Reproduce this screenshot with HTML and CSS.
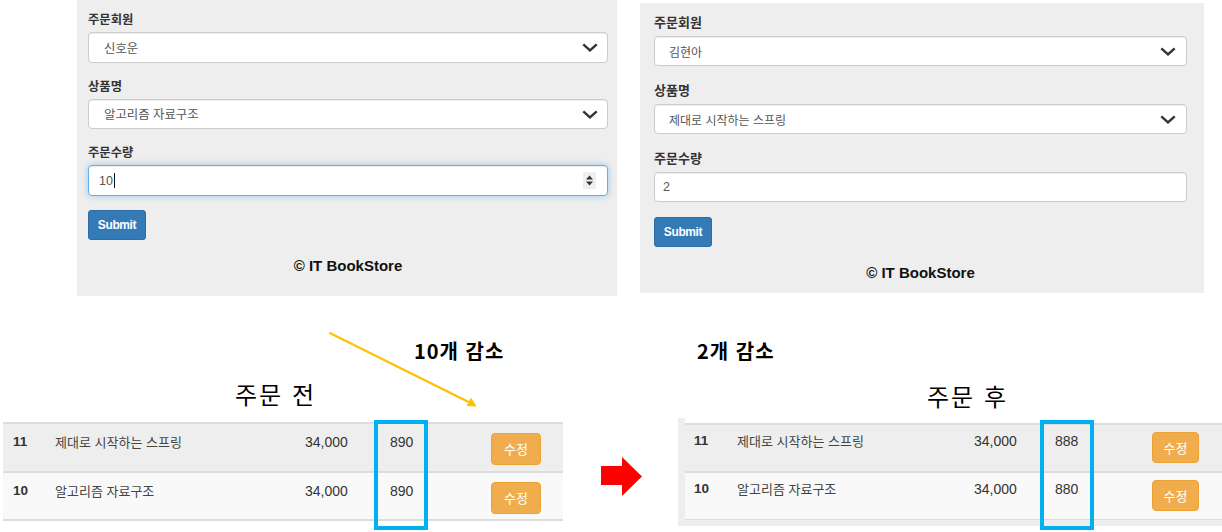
FILE: index.html
```html
<!DOCTYPE html>
<html lang="ko">
<head>
<meta charset="utf-8">
<title>주문 전 / 주문 후</title>
<link rel="stylesheet" href="styles.css">
</head>
<body>
<div class="page">
  <div class="forms">
    <form class="panel panel-left">
      <div class="group">
        <div class="label">주문회원</div>
        <div class="control select"><span>신호운</span><svg class="chev" viewBox="0 0 16 9" width="16" height="9"><path d="M1.3 1.3 L8 7.3 L14.7 1.3" fill="none" stroke="#333" stroke-width="2.4"/></svg></div>
      </div>
      <div class="group">
        <div class="label">상품명</div>
        <div class="control select select-2"><span>알고리즘 자료구조</span><svg class="chev" viewBox="0 0 16 9" width="16" height="9"><path d="M1.3 1.3 L8 7.3 L14.7 1.3" fill="none" stroke="#333" stroke-width="2.4"/></svg></div>
      </div>
      <div class="group">
        <div class="label">주문수량</div>
        <div class="control input focus"><span class="val">10<i class="caret"></i></span><svg class="spin" viewBox="0 0 13 17" width="13" height="17"><rect width="13" height="17" fill="#efefef"/><polygon points="3,7.5 6.5,3.5 10,7.5" fill="#333"/><polygon points="3,9.5 6.5,13.5 10,9.5" fill="#333"/></svg></div>
      </div>
      <div class="btn-submit">Submit</div>
      <div class="footer">© IT BookStore</div>
    </form>
    <form class="panel panel-right">
      <div class="group">
        <div class="label">주문회원</div>
        <div class="control select"><span>김현아</span><svg class="chev" viewBox="0 0 16 9" width="16" height="9"><path d="M1.3 1.3 L8 7.3 L14.7 1.3" fill="none" stroke="#333" stroke-width="2.4"/></svg></div>
      </div>
      <div class="group">
        <div class="label">상품명</div>
        <div class="control select"><span>제대로 시작하는 스프링</span><svg class="chev" viewBox="0 0 16 9" width="16" height="9"><path d="M1.3 1.3 L8 7.3 L14.7 1.3" fill="none" stroke="#333" stroke-width="2.4"/></svg></div>
      </div>
      <div class="group">
        <div class="label">주문수량</div>
        <div class="control input"><span class="val">2</span></div>
      </div>
      <div class="btn-submit">Submit</div>
      <div class="footer">© IT BookStore</div>
    </form>
  </div>

  <div class="notes">
    <span class="note note-1">10개 감소</span>
    <span class="note note-2">2개 감소</span>
  </div>

  <div class="captions">
    <span class="cap cap-1">주문 전</span>
    <span class="cap cap-2">주문 후</span>
  </div>

  <div class="tables">
    <div class="tbl tbl-left">
      <div class="row row-odd">
        <div class="cell num">11</div>
        <div class="cell title">제대로 시작하는 스프링</div>
        <div class="cell">34,000</div>
        <div class="cell">890</div>
        <div class="cell"><span class="btn-edit">수정</span></div>
      </div>
      <div class="row row-even">
        <div class="cell num">10</div>
        <div class="cell title">알고리즘 자료구조</div>
        <div class="cell">34,000</div>
        <div class="cell">890</div>
        <div class="cell"><span class="btn-edit">수정</span></div>
      </div>
      <div class="hl hl-left"></div>
    </div>

    <svg class="red-arrow" viewBox="0 0 41 39" width="41" height="39"><polygon points="0,9 21,9 21,0 41,19.5 21,39 21,28 0,28" fill="#ff0000"/></svg>

    <div class="tbl-frame">
      <div class="tbl tbl-right">
        <div class="row row-odd">
          <div class="cell num">11</div>
          <div class="cell title">제대로 시작하는 스프링</div>
          <div class="cell">34,000</div>
          <div class="cell">888</div>
          <div class="cell"><span class="btn-edit">수정</span></div>
        </div>
        <div class="row row-even">
          <div class="cell num">10</div>
          <div class="cell title">알고리즘 자료구조</div>
          <div class="cell">34,000</div>
          <div class="cell">880</div>
          <div class="cell"><span class="btn-edit">수정</span></div>
        </div>
      </div>
      <div class="hl hl-right"></div>
    </div>
  </div>

  <svg class="yellow-arrow" viewBox="0 0 1222 532" width="1222" height="532">
    <line x1="329.3" y1="332.7" x2="468.6" y2="402" stroke="#ffc000" stroke-width="2.2"/>
    <polygon points="476.7,406.5 466.6,406 471,397.6" fill="#ffc000"/>
  </svg>
</div>
</body>
</html>
```

FILE: styles.css
```css
* { box-sizing: border-box; }

html, body {
  margin: 0;
  padding: 0;
  background: #ffffff;
}

body {
  font-family: "Liberation Sans", "Noto Sans CJK KR", sans-serif;
  color: #333;
}

.page {
  position: relative;
  width: 1222px;
  height: 532px;
  overflow: hidden;
}

/* ---------- forms ---------- */
.forms {
  display: flex;
  align-items: flex-start;
  height: 296px;
}

.panel {
  margin: 0;
  background: #eeeeee;
  display: flex;
  flex-direction: column;
}

.panel-left {
  margin-left: 77px;
  width: 540px;
  height: 296px;
  padding: 10px 9px 0 11px;
}

.panel-right {
  margin-left: 23px;
  margin-top: 3px;
  width: 564px;
  height: 290px;
  padding: 10px 17px 0 14px;
}

.label {
  font-family: "Noto Sans CJK KR", "Liberation Sans", sans-serif;
  font-weight: 700;
  color: #333;
  line-height: 18px;
  height: 18px;
}

.panel-left .label { font-size: 12.3px; margin-bottom: 4px; }
.panel-right .label { font-size: 13px; margin-bottom: 5px; }

.panel-left .group { margin-bottom: 14px; }
.panel-right .group { margin-bottom: 15px; }

.control {
  display: flex;
  align-items: center;
  justify-content: space-between;
  background: #fff;
  border: 1px solid #cccccc;
  border-radius: 4px;
  box-shadow: inset 0 1px 1px rgba(0, 0, 0, 0.075);
  color: #555;
  font-family: "Noto Sans CJK KR", "Liberation Sans", sans-serif;
}

.panel-left .control { height: 31px; font-size: 12.4px; }
.panel-left .select-2 { height: 30px; }
.panel-right .control { height: 30px; font-size: 12px; }

.panel-left .select { padding: 0 9px 0 15px; }
.panel-right .select { padding: 0 10px 0 14px; }

.chev { display: block; flex: none; }

.input { padding: 0 11px 0 10px; }
.panel-right .input { padding-left: 8px; }

.input .val {
  font-family: "Liberation Sans", sans-serif;
  font-size: 12.5px;
  color: #555;
  display: flex;
  align-items: center;
}

.caret {
  display: inline-block;
  width: 1px;
  height: 15px;
  background: #111;
  margin-left: 1px;
}

.focus {
  border-color: #66afe9;
  box-shadow: inset 0 1px 1px rgba(0, 0, 0, 0.075), 0 0 6px rgba(102, 175, 233, 0.65);
}

.spin { display: block; flex: none; }

.btn-submit {
  width: 58px;
  height: 30px;
  background: #337ab7;
  border: 1px solid #2e6da4;
  border-radius: 3px;
  color: #fff;
  font-family: "Liberation Sans", sans-serif;
  font-weight: 700;
  font-size: 12px;
  letter-spacing: -0.4px;
  display: flex;
  align-items: center;
  justify-content: center;
}

.footer {
  margin-top: 16px;
  text-align: center;
  font-family: "Liberation Sans", sans-serif;
  font-weight: 700;
  font-size: 15px;
  line-height: 20px;
  color: #111;
}

/* ---------- annotations ---------- */
.notes {
  display: grid;
  grid-template-columns: 697px auto;
  margin-top: 43px;
  height: 24px;
}

.note {
  font-family: "Noto Sans CJK KR", sans-serif;
  font-weight: 700;
  font-size: 20px;
  letter-spacing: 1px;
  line-height: 24px;
  color: #000;
}

.note-1 { padding-left: 414px; }

.captions {
  display: grid;
  grid-template-columns: 927px auto;
  margin-top: 16px;
  height: 30px;
}

.cap {
  font-family: "Noto Sans CJK KR", sans-serif;
  font-size: 24px;
  letter-spacing: 2px;
  line-height: 30px;
  color: #000;
}

.cap-1 { padding-left: 235px; }
.cap-2 { position: relative; top: 2px; }

/* ---------- tables ---------- */
.tables {
  display: flex;
  align-items: flex-start;
  margin-top: 9px;
}

.tbl {
  position: relative;
  background: #fff;
}

.tbl-left {
  margin-left: 3px;
  width: 560px;
  padding-top: 4px;
  border-bottom: 2px solid #dddddd;
}

.row {
  display: grid;
  border-top: 2px solid #dddddd;
  font-size: 14px;
  color: #333;
}

.row-odd { background: #eeeeee; }
.row-even { background: #f9f9f9; }

.tbl-left .row {
  grid-template-columns: 42px 250px 85px 101px 82px;
  height: 49px;
}
.tbl-left .row-even { height: 48px; }

.tbl-left .cell { padding: 9px 0 0 10px; }

.cell {
  line-height: 18px;
  font-family: "Liberation Sans", "Noto Sans CJK KR", sans-serif;
}

.cell.num { font-weight: 700; font-size: 13.5px; }

.cell.title {
  font-family: "Noto Sans CJK KR", "Liberation Sans", sans-serif;
  font-size: 13px;
  color: #444;
}

.btn-edit {
  display: flex;
  align-items: center;
  justify-content: center;
  background: #f0ad4e;
  border: 1px solid #eea236;
  border-radius: 4px;
  color: #fff;
  font-family: "Noto Sans CJK KR", sans-serif;
  font-size: 13px;
}

.tbl-left .btn-edit { width: 50px; height: 32px; }
.tbl-right .btn-edit { width: 47px; height: 31px; }

.red-arrow {
  display: block;
  flex: none;
  margin-left: 38px;
  margin-top: 39px;
}

.tbl-frame {
  position: relative;
  margin-left: 36px;
  width: 544px;
  background: #eeeeee;
  padding: 0 0 6px 7px;
}

.tbl-right {
  padding-top: 5px;
  border-bottom: 1px solid #dddddd;
}

.tbl-right .row {
  grid-template-columns: 43px 237px 81px 97px 79px;
  height: 48px;
}
.tbl-right .row-even { height: 48px; }

.tbl-right .cell { padding: 7px 0 0 9px; }

.hl {
  position: absolute;
  top: 2px;
  width: 54px;
  height: 110px;
  border: 4px solid #00b0f0;
}

.hl-left { left: 371px; }
.hl-right { left: 362px; }

/* ---------- overlay arrow ---------- */
.yellow-arrow {
  position: absolute;
  left: 0;
  top: 0;
  pointer-events: none;
}
```
